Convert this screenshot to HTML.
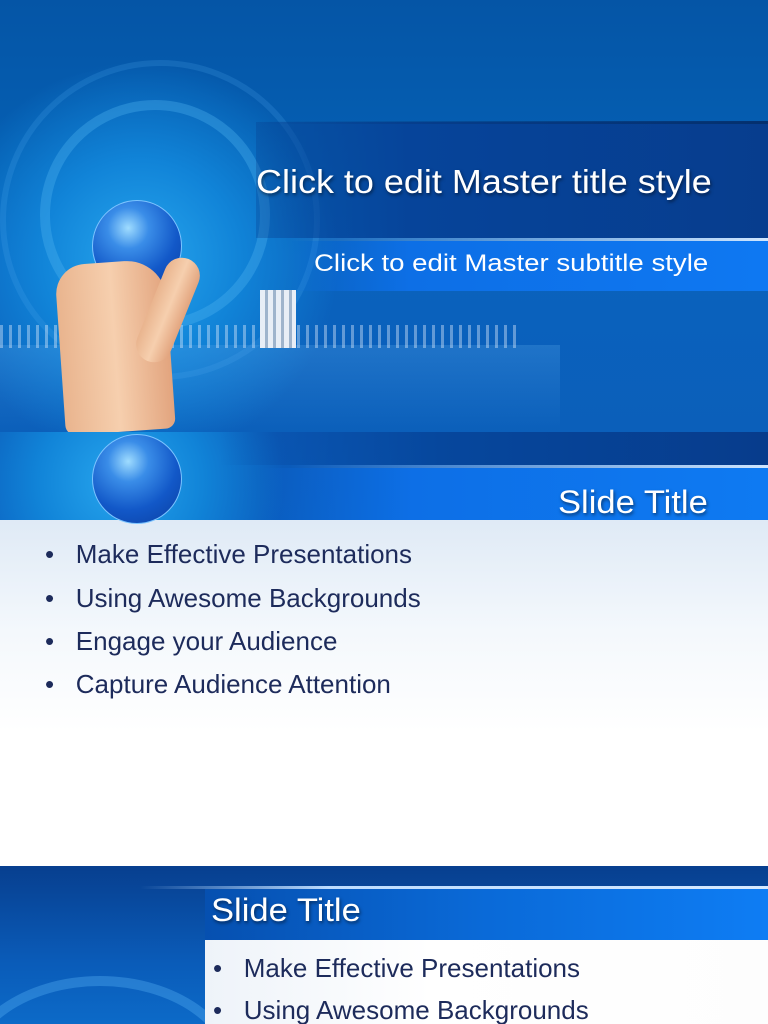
<!DOCTYPE html>
<html><head><meta charset="utf-8"><style>
*{margin:0;padding:0;box-sizing:border-box}
html,body{width:768px;height:1024px;overflow:hidden}
body{background:#fff;font-family:"Liberation Sans",sans-serif;position:relative}
.abs{position:absolute}
.t{white-space:nowrap;transform-origin:left center;display:inline-block}
.s1{left:0;top:0;width:768px;height:432px;overflow:hidden;background:linear-gradient(180deg,#0555a6 0%,#0560b4 40%,#0a62bd 60%,#0b5fba 100%)}
.glow{border-radius:50%;background:radial-gradient(circle,#27a6ee 0%,#1184d8 35%,rgba(10,100,200,0) 70%)}
.ring{border-radius:50%;border:10px solid rgba(80,180,240,.35)}
.globe{border-radius:50%;background:radial-gradient(circle at 40% 30%,#9fdcff 0%,#3a8de8 25%,#1258c8 60%,#0a3ea0 100%);border:1px solid #7cc4ff}
.hand{background:linear-gradient(90deg,#e9b48e,#f6cfae 50%,#e2a47e);border-radius:40px 50px 10px 10px}
.bul{color:#1d2b5b;font-size:26px;position:absolute}
</style></head><body>

<div class="abs s1">
  <div class="abs glow" style="left:-60px;top:60px;width:400px;height:400px"></div>
  <div class="abs ring" style="left:40px;top:100px;width:230px;height:230px"></div>
  <div class="abs ring" style="left:0px;top:60px;width:320px;height:320px;border-width:6px;border-color:rgba(80,170,240,.2)"></div>
  <div class="abs" style="left:256px;top:122px;width:512px;height:116px;background:linear-gradient(90deg,rgba(6,60,140,.3),#06449a 30%,#073d8e)"></div>
  <div class="abs" style="left:256px;top:121px;width:512px;height:3px;background:linear-gradient(90deg,rgba(0,0,0,0),#04306e)"></div>
  <div class="abs" style="left:290px;top:238px;width:478px;height:3px;background:linear-gradient(90deg,rgba(255,255,255,0),#cfe6ff)"></div>
  <div class="abs" style="left:290px;top:241px;width:478px;height:50px;background:linear-gradient(90deg,rgba(15,110,230,0),#0d6fe6 25%,#0e78f2)"></div>
  <div class="abs" style="left:0;top:345px;width:560px;height:87px;background:linear-gradient(180deg,rgba(80,160,230,.3),rgba(20,110,210,0));"></div>
  <div class="abs" style="left:0;top:325px;width:520px;height:23px;background:repeating-linear-gradient(90deg,rgba(230,240,255,.8) 0 3px,rgba(0,0,0,0) 3px 9px);opacity:.5"></div>
  <div class="abs" style="left:260px;top:290px;width:36px;height:58px;background:repeating-linear-gradient(90deg,#e8eef6 0 5px,#9fb4cc 5px 8px)"></div>
  <div class="abs globe" style="left:92px;top:200px;width:90px;height:92px"></div>
  <div class="abs hand" style="left:60px;top:262px;width:110px;height:170px;transform:rotate(-4deg);border-radius:30px 40px 10px 10px"></div>
  <div class="abs hand" style="left:150px;top:255px;width:36px;height:110px;transform:rotate(22deg);border-radius:18px"></div>
  <div class="abs" style="left:256px;top:163px;color:#fff;font-size:33px;text-shadow:1px 2px 3px rgba(0,0,0,.5)"><span class="t" style="transform:scaleX(1.09)">Click to edit Master title style</span></div>
  <div class="abs" style="left:314px;top:250px;color:#fff;font-size:24px"><span class="t" style="transform:scaleX(1.15)">Click to edit Master subtitle style</span></div>
</div>

<div class="abs" style="left:0;top:432px;width:768px;height:434px;overflow:hidden;background:linear-gradient(180deg,#0b5ab8 0,#0a5cbd 88px,#dfeaf6 88px,#f4f8fc 200px,#fff 300px)">
  <div class="abs" style="left:0;top:0;width:768px;height:88px;overflow:hidden">
    <div class="abs glow" style="left:-60px;top:-100px;width:360px;height:300px"></div>
  </div>
  <div class="abs" style="left:220px;top:0;width:548px;height:33px;background:linear-gradient(90deg,rgba(6,60,140,0),#06479d 40%,#073c8c)"></div>
  <div class="abs" style="left:290px;top:33px;width:478px;height:3px;background:linear-gradient(90deg,rgba(255,255,255,0),#cfe6ff)"></div>
  <div class="abs" style="left:260px;top:36px;width:508px;height:52px;background:linear-gradient(90deg,rgba(15,110,230,0),#0d6fe6 30%,#0e7af2)"></div>
  <div class="abs globe" style="left:92px;top:2px;width:90px;height:90px"></div>
  <div class="abs" style="left:558px;top:52px;color:#fff;font-size:32px;text-shadow:1px 2px 3px rgba(0,0,0,.5)"><span class="t" style="transform:scaleX(1.08)">Slide Title</span></div>
  <div class="bul" style="left:45px;top:107px"><span class="t">•&nbsp;&nbsp;&nbsp;Make Effective Presentations</span></div>
  <div class="bul" style="left:45px;top:151px"><span class="t">•&nbsp;&nbsp;&nbsp;Using Awesome Backgrounds</span></div>
  <div class="bul" style="left:45px;top:194px"><span class="t">•&nbsp;&nbsp;&nbsp;Engage your Audience</span></div>
  <div class="bul" style="left:45px;top:237px"><span class="t">•&nbsp;&nbsp;&nbsp;Capture Audience Attention</span></div>
</div>

<div class="abs" style="left:0;top:866px;width:768px;height:158px;overflow:hidden;background:linear-gradient(180deg,#073f8f,#0a5bb8 60%,#0c6ac8)">
  <div class="abs ring" style="left:-40px;top:110px;width:280px;height:200px;border-color:rgba(80,170,240,.4)"></div>
  <div class="abs" style="left:140px;top:20px;width:628px;height:3px;background:linear-gradient(90deg,rgba(255,255,255,0),#bcdcff 30%,#d5e9ff)"></div>
  <div class="abs" style="left:205px;top:23px;width:563px;height:51px;background:linear-gradient(90deg,#0650b0,#0a6ad8 50%,#0e7df4)"></div>
  <div class="abs" style="left:205px;top:74px;width:563px;height:84px;background:linear-gradient(90deg,#eef3f9,#fff 40%,#fdfdfd)"></div>
  <div class="abs" style="left:211px;top:26px;color:#fff;font-size:32px;text-shadow:1px 2px 3px rgba(0,0,0,.5)"><span class="t" style="transform:scaleX(1.08)">Slide Title</span></div>
  <div class="bul" style="left:213px;top:87px"><span class="t">•&nbsp;&nbsp;&nbsp;Make Effective Presentations</span></div>
  <div class="bul" style="left:213px;top:129px"><span class="t">•&nbsp;&nbsp;&nbsp;Using Awesome Backgrounds</span></div>
</div>
</body></html>
